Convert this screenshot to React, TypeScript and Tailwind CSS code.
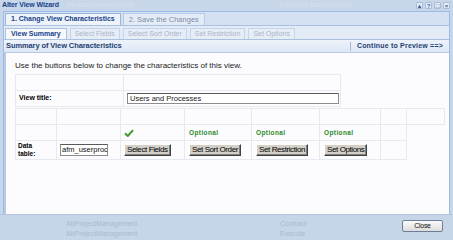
const FONT = { fontFamily: '"Liberation Sans", Arial, sans-serif' };

const innerTabs = ['Select Fields', 'Select Sort Order', 'Set Restriction', 'Set Options'];

function WinButton({ children }: { children: React.ReactNode }) {
  return (
    <span className="flex h-[7px] w-[7px] items-center justify-center rounded-[1px] border border-[#a8bcd8] bg-[#e6eef9] text-[6px] font-bold leading-none text-[#3b5f94]">
      {children}
    </span>
  );
}

function Btn({ label }: { label: string }) {
  return (
    <button className="h-[12px] border border-t-white border-l-white border-b-[#404040] border-r-[#404040] bg-[#d4d0c8] px-[2px] text-[8px] leading-none tracking-[-0.4px] text-black shadow-[inset_-1px_-1px_0_#808080]">
      {label}
    </button>
  );
}

export default function App() {
  return (
    <div className="relative flex h-[240px] w-[453px] flex-col overflow-hidden bg-[#c8d6e9]" style={FONT}>
      {/* title bar */}
      <div className="flex h-[11px] items-center pl-[2px] pr-[3px]">
        <span className="text-[7px] font-bold tracking-[-0.1px] text-[#15428b]">Alter View Wizard</span>
        <span className="ml-[8px] text-[7px] text-[#d6e0ee]">AbAssetManagement</span>
        <span className="ml-[146px] text-[7px] text-[#d6e0ee]">Furniture Asset Control</span>
        <div className="ml-auto flex gap-[2px]">
          <WinButton>▲</WinButton>
          <WinButton>?</WinButton>
          <WinButton>□</WinButton>
          <WinButton>×</WinButton>
        </div>
      </div>

      <div className="mx-[3px] flex flex-1 flex-col border border-[#99bbe8] border-b-0 bg-[#dfe8f6]">
        {/* outer tabs */}
        <div className="flex h-[14px] items-end gap-[2px] border-b border-[#a9c0de] bg-[#d3e1f2] pl-[1px]">
          <div className="flex h-[12px] items-center border border-b-0 border-[#99b4d8] bg-[#eef3fa] px-[5px] text-[7px] font-bold text-[#15428b]">
            1. Change View Characteristics
          </div>
          <div className="flex h-[12px] items-center border border-b-0 border-[#b8cbe4] bg-[#e3ebf6] px-[5px] text-[7.5px] text-[#7d8ea8]">
            2. Save the Changes
          </div>
        </div>

        {/* inner tabs */}
        <div className="flex h-[14px] items-end gap-[3px] border-b border-[#a9c0de] bg-[#e3ebf6] pl-[1px]">
          <div className="flex h-[11px] items-center border border-b-0 border-[#a9c0de] bg-[#f7f9fd] px-[5px] text-[7px] font-bold text-[#15428b]">
            View Summary
          </div>
          {innerTabs.map((t) => (
            <div
              key={t}
              className="flex h-[11px] items-center border border-b-0 border-[#c5d4e8] bg-[#e6edf7] px-[4px] text-[7px] text-[#a9b5c6]"
            >
              {t}
            </div>
          ))}
        </div>

        {/* section header */}
        <div className="flex h-[13px] items-center border-b border-[#b9cbe3] bg-gradient-to-b from-[#eef3fb] to-[#dde7f5] pl-[2px] pr-[6px]">
          <span className="text-[7.5px] font-bold tracking-[-0.1px] text-[#1f3f72]">Summary of View Characteristics</span>
          <span className="ml-auto mr-[6px] h-[9px] w-px bg-[#a8bbd6]" />
          <span className="text-[7px] font-bold tracking-[0.2px] text-[#1f3f72]">Continue to Preview ==&gt;</span>
        </div>

        {/* content */}
        <div className="flex-1 border-l-2 border-[#b7cae4] bg-[#fcfcff] pl-[9px] pr-[4px]">
          <p className="mt-[9px] text-[8px] leading-none text-[#222]">
            Use the buttons below to change the characteristics of this view.
          </p>

          <div className="mt-[4px] grid w-[326px] grid-cols-[109px_217px] text-[7px]">
            <div className="h-[17px] border border-[#e8e8f0]" />
            <div className="h-[17px] border border-l-0 border-[#e8e8f0]" />
            <div className="flex h-[16px] items-center border border-t-0 border-[#e8e8f0] pl-[3px] font-bold text-black">
              View title:
            </div>
            <div className="flex h-[16px] items-center border border-l-0 border-t-0 border-[#e8e8f0] pl-[3px]">
              <div className="flex h-[11px] w-[212px] items-center border border-[#8c8c8c] border-t-[#5a5a5a] bg-white pl-[2px] text-[7.5px] text-[#222]">
                Users and Processes
              </div>
            </div>
          </div>

          <div className="mt-[1px] grid w-[430px] grid-cols-[42px_64px_64px_67px_68px_61px_26px_38px] text-[7px]">
            {Array.from({ length: 8 }).map((_, i) => (
              <div key={i} className="h-[17px] border-r border-b border-t border-[#e8e8f0] first:border-l" />
            ))}

            <div className="h-[16px] border-r border-b border-l border-[#e8e8f0]" />
            <div className="h-[16px] border-r border-b border-[#e8e8f0]" />
            <div className="flex h-[16px] items-center border-r border-b border-[#e8e8f0] pl-[3px]">
              <svg width="10" height="8" viewBox="0 0 10 8">
                <path d="M1 4.2 L3.8 7 L9 1.2" fill="none" stroke="#3f9a2c" strokeWidth="2" />
              </svg>
            </div>
            {[0, 1, 2].map((i) => (
              <div
                key={i}
                className="flex h-[16px] items-center border-r border-b border-[#e8e8f0] pl-[4px] text-[6.5px] font-bold tracking-[0.4px] text-[#2a8a2a]"
              >
                Optional
              </div>
            ))}
            <div className="h-[16px] border-r border-b border-[#e8e8f0]" />
            <div />

            <div className="flex h-[19px] flex-col justify-center border-r border-b border-l border-[#e8e8f0] pl-[2px] text-[6.5px] font-bold leading-[8px] text-black">
              <span>Data</span>
              <span>table:</span>
            </div>
            <div className="flex h-[19px] items-center border-r border-b border-[#e8e8f0] pl-[3px]">
              <div className="flex h-[12px] w-[48px] items-center overflow-hidden border border-[#8c8c8c] border-t-[#5a5a5a] bg-white pl-[1px] text-[7.5px] text-[#111]">
                afm_userproc
              </div>
            </div>
            <div className="flex h-[19px] items-center border-r border-b border-[#e8e8f0] pl-[3px]">
              <Btn label="Select Fields" />
            </div>
            <div className="flex h-[19px] items-center border-r border-b border-[#e8e8f0] pl-[4px]">
              <Btn label="Set Sort Order" />
            </div>
            <div className="flex h-[19px] items-center border-r border-b border-[#e8e8f0] pl-[4px]">
              <Btn label="Set Restriction" />
            </div>
            <div className="flex h-[19px] items-center border-r border-b border-[#e8e8f0] pl-[4px]">
              <Btn label="Set Options" />
            </div>
            <div className="h-[19px] border-r border-b border-[#e8e8f0]" />
            <div />
          </div>
        </div>
      </div>

      {/* footer */}
      <div className="relative flex h-[26px] items-center justify-end border-t border-[#b3c6e0] bg-[#c6d5e8] pr-[10px]">
        <span className="absolute left-[66px] top-[5px] text-[7px] leading-none text-[#a9bad2]">AbProjectManagement</span>
        <span className="absolute left-[66px] top-[15px] text-[7px] leading-none text-[#a9bad2]">AbProjectManagement</span>
        <span className="absolute left-[280px] top-[5px] text-[7px] leading-none text-[#a9bad2]">Contract</span>
        <span className="absolute left-[280px] top-[15px] text-[7px] leading-none text-[#a9bad2]">Execute</span>
        <button className="relative mt-[-4px] h-[12px] w-[41px] rounded-[2px] border border-[#6d7f98] bg-gradient-to-b from-[#fbfbfb] to-[#dcdcdc] text-[7px] leading-none tracking-[-0.3px] text-[#111]">
          Close
        </button>
      </div>
    </div>
  );
}
